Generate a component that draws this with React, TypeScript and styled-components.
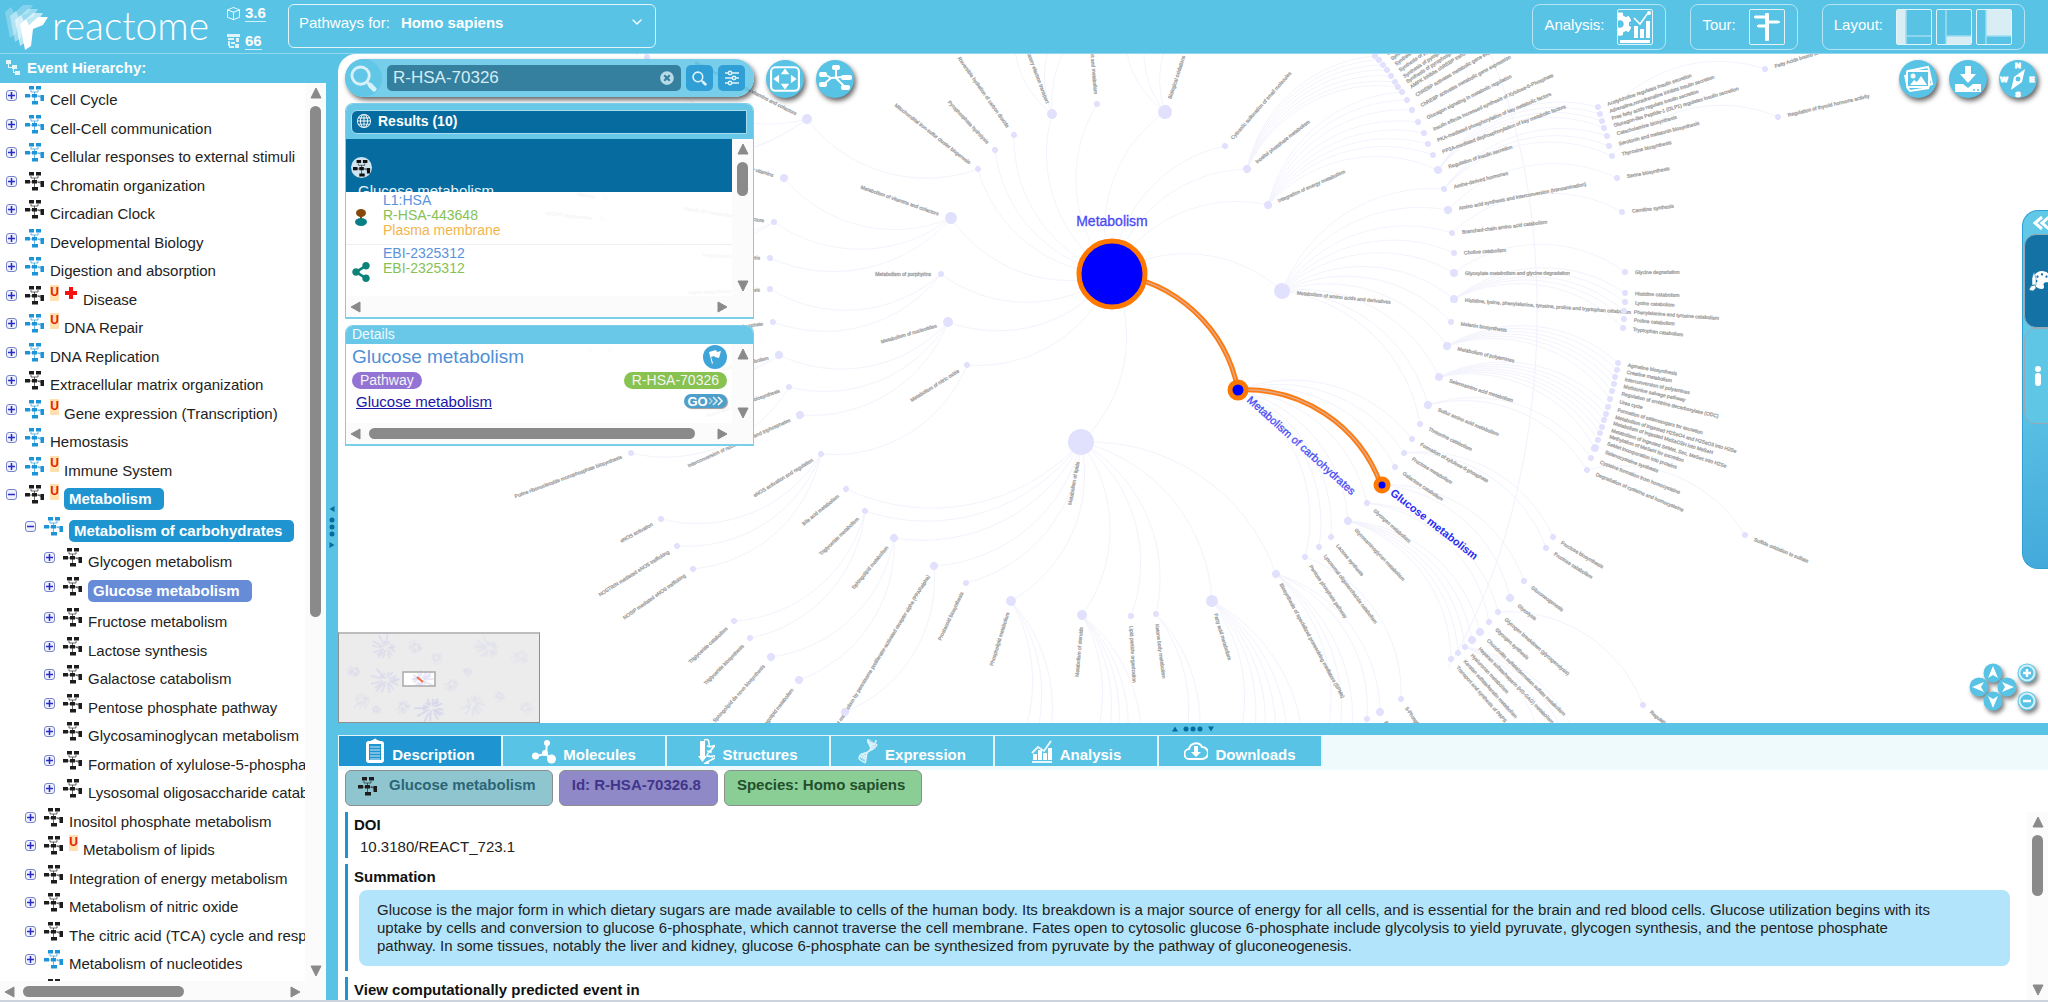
import React from "react";
import styled, { createGlobalStyle, css } from "styled-components";
import { FaCog, FaDna, FaInfo, FaPalette, FaShareAlt, FaTimesCircle } from "react-icons/fa";
import { BsGlobe, BsBox } from "react-icons/bs";
import { ChevronDown } from "lucide-react";

const sky = "#58c3e5";
const active = "#1e94d0";
const deep = "#066b9f";
const fontStack = `"Liberation Sans", Arial, sans-serif`;

const GlobalStyle = createGlobalStyle`
  * { box-sizing: border-box; }
  body { margin: 0; font: 15px ${fontStack}; color: #222; background: #fff; }
  button, input, select { font: inherit; color: inherit; margin: 0; padding: 0; border: 0; background: none; }
  button { cursor: pointer; }
  h1, h2, h3, p, ul { margin: 0; padding: 0; font-size: inherit; }
  ul { list-style: none; }
  svg { display: block; flex: none; }
`;

const Page = styled.div`
  height: 100vh;
  display: flex;
  flex-direction: column;
  overflow: hidden;
  background: ${sky};
  border-bottom: 2px solid #cdd3dc;
`;

/* ---------- header ---------- */

const Header = styled.header`
  height: 54px;
  flex: none;
  display: flex;
  align-items: flex-start;
  padding: 4px 23px 0 5px;
  color: #fff;
  border-bottom: 1px solid #8fd7ee;
`;

const Logo = styled.a`
  display: flex;
  width: 222px;
  color: #fff;
  text-decoration: none;
`;

const Wordmark = styled.span`
  font: 300 39px/42px Lato, ${fontStack};
  padding-left: 3px;
`;

const Versions = styled.div`
  width: 61px;
  display: flex;
  flex-direction: column;
  gap: 10px;
`;

const Version = styled.a`
  display: flex;
  align-items: center;
  gap: 5px;
  color: #fff;
  font-weight: bold;
  text-decoration: none;
  line-height: 17px;
  span { border-bottom: 1px solid #d5eff9; }
`;

const SpeciesBox = styled.label`
  width: 368px;
  height: 44px;
  display: flex;
  align-items: center;
  gap: 10px;
  padding: 0 10px 8px;
  border: 1px solid #e3f5fb;
  border-radius: 6px;
  select {
    flex: 1;
    padding-left: 1px;
    appearance: none;
    font-weight: bold;
    color: #fff;
  }
`;

const HeaderTools = styled.div`
  margin-left: auto;
  display: flex;
  gap: 24px;
`;

const ToolBox = styled.div`
  height: 46px;
  display: flex;
  align-items: center;
  gap: 4px;
  padding: 0 12px 0 11px;
  border: 1px solid #b5e4f4;
  border-radius: 8px;
  span { padding: 0 9px 5px 0; }
`;

const ToolButton = styled.button`
  width: 36px;
  height: 36px;
  display: grid;
  place-items: center;
  border: 1px solid #e3f5fb;
  border-radius: 2px;
  overflow: hidden;
`;

/* ---------- scroll bars ---------- */

const Bar = styled.div<{ $horizontal?: boolean }>`
  display: flex;
  flex: none;
  align-items: center;
  justify-content: space-between;
  background: #fbfbfb;
  ${(p) => (p.$horizontal ? css`height: 21px; padding: 0 4px;` : css`width: 21px; padding: 4px 0; flex-direction: column;`)}
`;

const Track = styled.div<{ $horizontal?: boolean }>`
  flex: 1;
  display: flex;
  flex-direction: ${(p) => (p.$horizontal ? "row" : "column")};
  padding: ${(p) => (p.$horizontal ? "0 7px" : "7px 0")};
`;

const Thumb = styled.div<{ $size: number; $horizontal?: boolean }>`
  flex: 0 0 ${(p) => p.$size}%;
  ${(p) => (p.$horizontal ? "height" : "width")}: 11px;
  border-radius: 6px;
  background: #8a8a8a;
`;

const arrowPaths = {
  up: "M6 1 11 11H1Z",
  down: "M6 11 11 1H1Z",
  left: "M1 6 10 1V11Z",
  right: "M11 6 2 1V11Z",
};

const Arrow = ({ to }: { to: keyof typeof arrowPaths }) => (
  <svg width="12" height="12" viewBox="0 0 12 12">
    <path d={arrowPaths[to]} fill="#8a8a8a" stroke="#8a8a8a" strokeLinejoin="round" />
  </svg>
);

const ScrollBar = ({ size, horizontal }: { size?: number; horizontal?: boolean }) => (
  <Bar $horizontal={horizontal} aria-hidden>
    <Arrow to={horizontal ? "left" : "up"} />
    <Track $horizontal={horizontal}>{size ? <Thumb $size={size} $horizontal={horizontal} /> : null}</Track>
    <Arrow to={horizontal ? "right" : "down"} />
  </Bar>
);

/* ---------- hierarchy ---------- */

const Body = styled.div`
  flex: 1;
  min-height: 0;
  display: flex;
`;

const Sidebar = styled.aside`
  width: 326px;
  flex: none;
  display: flex;
  flex-direction: column;
`;

const SidebarTitle = styled.h2`
  height: 29px;
  display: flex;
  align-items: center;
  gap: 6px;
  padding: 0 0 2px 6px;
  color: #fff;
`;

const TreePane = styled.div`
  flex: 1;
  min-height: 0;
  display: flex;
  background: #fff;
`;

const Tree = styled.ul`
  flex: 1;
  min-width: 0;
  padding-top: 2px;
  overflow: hidden;
  display: flex;
  flex-direction: column;
`;

const TreeRow = styled.li<{ $level: number; $selected: boolean }>`
  flex: 1 0 ${(p) => (p.$selected ? 31 : 28)}px;
  display: flex;
  align-items: flex-start;
  padding-left: ${(p) => 6 + 19 * p.$level}px;
  white-space: nowrap;
  line-height: 22px;
`;

const TreeTail = styled.li`
  flex: 0 0 3px;
  overflow: hidden;
  padding-left: 44px;
`;

const Toggle = styled.button`
  width: 11px;
  height: 11px;
  flex: none;
  margin: 5px 8px 0 0;
  display: grid;
  place-items: center;
  border: 1px solid #7884c8;
  border-radius: 3px;
  background: #eef0fb;
`;

const Badge = styled.span`
  width: 9px;
  height: 16px;
  margin: 0 0 0 5px;
  flex: none;
  background: #ffe0ae;
  color: #e32400;
  font: bold 12px/14px ${fontStack};
  text-align: center;
`;

const RowLabel = styled.span<{ $tone?: string }>`
  margin: 4px 0 0 5px;
  ${(p) =>
    p.$tone &&
    css`
      padding: 0 12px 0 5px;
      border-radius: 5px;
      background: ${p.$tone};
      color: #fff;
      font-weight: bold;
    `}
`;

const PathwayIcon = ({ color = "#222", size = 20 }: { color?: string; size?: number }) => (
  <svg width={size} height={size} viewBox="0 0 20 20">
    <path d="M6 5v2h7V5M9.500 7v3M2 11h15M9.500 10v7M13 11l4 2" fill="none" stroke={color} strokeOpacity=".65" />
    <path d="M4 1h5v3.500H4zM11 1h5v3.500h-5zM0 9h5v3.500H0zM7 9h5v3.500H7zM15.500 10h3.500v6h-3.500zM7 16h6v3.500H7z" fill={color} />
  </svg>
);

type Row = { name: string; level: number; blue?: boolean; updated?: boolean; disease?: boolean; tone?: string; open?: boolean };

const rows: Row[] = [
  { name: "Cell Cycle", level: 0, blue: true },
  { name: "Cell-Cell communication", level: 0, blue: true },
  { name: "Cellular responses to external stimuli", level: 0, blue: true },
  { name: "Chromatin organization", level: 0 },
  { name: "Circadian Clock", level: 0 },
  { name: "Developmental Biology", level: 0, blue: true },
  { name: "Digestion and absorption", level: 0, blue: true },
  { name: "Disease", level: 0, updated: true, disease: true },
  { name: "DNA Repair", level: 0, blue: true, updated: true },
  { name: "DNA Replication", level: 0, blue: true },
  { name: "Extracellular matrix organization", level: 0 },
  { name: "Gene expression (Transcription)", level: 0, blue: true, updated: true },
  { name: "Hemostasis", level: 0, blue: true },
  { name: "Immune System", level: 0, blue: true, updated: true },
  { name: "Metabolism", level: 0, updated: true, open: true, tone: active },
  { name: "Metabolism of carbohydrates", level: 1, blue: true, open: true, tone: active },
  { name: "Glycogen metabolism", level: 2 },
  { name: "Glucose metabolism", level: 2, tone: "#668cd8" },
  { name: "Fructose metabolism", level: 2 },
  { name: "Lactose synthesis", level: 2 },
  { name: "Galactose catabolism", level: 2 },
  { name: "Pentose phosphate pathway", level: 2 },
  { name: "Glycosaminoglycan metabolism", level: 2 },
  { name: "Formation of xylulose-5-phosphate", level: 2 },
  { name: "Lysosomal oligosaccharide catabolism", level: 2 },
  { name: "Inositol phosphate metabolism", level: 1 },
  { name: "Metabolism of lipids", level: 1, updated: true },
  { name: "Integration of energy metabolism", level: 1 },
  { name: "Metabolism of nitric oxide", level: 1 },
  { name: "The citric acid (TCA) cycle and respiratory electron transport", level: 1 },
  { name: "Metabolism of nucleotides", level: 1, blue: true },
];

const TreeFoot = styled.div`
  height: 19px;
  padding-right: 21px;
  background: #fbfbfb;
`;

const Hierarchy = () => (
  <Sidebar>
    <SidebarTitle>
      <svg width="15" height="15" viewBox="0 0 15 15" fill="#e4f5fb">
        <path d="M0 0h5v4H0zM6 5h5v4H6zM9 11h5v4H9zM2 4h1v3h3v1H2zM7 9h1v3h2v1H7z" />
      </svg>
      Event Hierarchy:
    </SidebarTitle>
    <TreePane>
      <Tree>
        {rows.map((r) => (
          <TreeRow key={r.name} $level={r.level} $selected={!!r.tone}>
            <Toggle aria-label={`Toggle ${r.name}`}>
              <svg width="7" height="7" viewBox="0 0 7 7">
                <path d={r.open ? "M0 3.500h7" : "M0 3.500h7M3.500 0v7"} stroke="#2b2bc8" strokeWidth="1.500" />
              </svg>
            </Toggle>
            <PathwayIcon color={r.blue ? "#1e94d8" : "#1d1d1d"} />
            {r.updated && <Badge>U</Badge>}
            {r.disease && (
              <svg width="19" height="18" viewBox="0 0 19 18">
                <path d="M10 2h4v4h4v4h-4v4h-4v-4H6V6h4z" fill="#f31111" />
              </svg>
            )}
            <RowLabel $tone={r.tone}>{r.name}</RowLabel>
          </TreeRow>
        ))}
        <TreeTail>
          <PathwayIcon />
        </TreeTail>
      </Tree>
      <ScrollBar size={60} />
    </TreePane>
    <TreeFoot>
      <ScrollBar size={62} horizontal />
    </TreeFoot>
  </Sidebar>
);

/* ---------- splitters ---------- */

const Splitter = styled.div`
  flex: 0 0 12px;
  display: flex;
  align-items: center;
  justify-content: center;
  background: ${sky};
`;

const Grip = ({ vertical }: { vertical?: boolean }) => (
  <svg width={vertical ? 8 : 44} height={vertical ? 44 : 8} viewBox={vertical ? "0 0 8 44" : "0 0 44 8"} fill={deep}>
    <g transform={vertical ? "matrix(0 1 1 0 0 0)" : undefined}>
      <path d="M1 6.500h6L4 1.500zM37 1.500h6L40 6.500z" />
      <circle cx="15" cy="4" r="2.500" />
      <circle cx="22" cy="4" r="2.500" />
      <circle cx="29" cy="4" r="2.500" />
    </g>
  </svg>
);

/* ---------- pathway diagram ---------- */

type Node = [x: number, y: number, r: number, label: string, parent: number];

const nodes: Node[] = [
  [1112, 274, 0, "", -1],
  [1282, 291, 8, "Metabolism of amino acids and derivatives", 0],
  [1081, 442, 13, "Metabolism of lipids", 0],
  [1268, 205, 4, "Integration of energy metabolism", 0],
  [1247, 169, 4, "Inositol phosphate metabolism", 0],
  [1225, 146, 3, "Cytosolic sulfonation of small molecules", 0],
  [1165, 112, 7, "Biological oxidations", 0],
  [1097, 104, 3, "Abacavir transport and metabolism", 0],
  [1052, 114, 5, "The citric acid (TCA) cycle and respiratory electron transport", 0],
  [1014, 135, 3, "Reversible hydration of carbon dioxide", 0],
  [995, 150, 3, "Pyrophosphate hydrolysis", 0],
  [978, 169, 3, "Mitochondrial iron-sulfur cluster biogenesis", 0],
  [951, 218, 6, "Metabolism of vitamins and cofactors", 0],
  [941, 274, 3, "Metabolism of porphyrins", 0],
  [948, 322, 5, "Metabolism of nucleotides", 0],
  [967, 365, 3, "Metabolism of nitric oxide", 0],
  [1238, 390, 0, "", 0],
  [1381, 485, 0, "", 16],
  // lipids
  [846, 489, 3, "Bile acid metabolism", 2],
  [865, 511, 3, "Triglyceride metabolism", 2],
  [894, 538, 4, "Sphingolipid metabolism", 2],
  [934, 566, 4, "Regulation of lipid metabolism by peroxisome proliferator-activated receptor alpha (PPARalpha)", 2],
  [966, 583, 3, "Prostanoid biosynthesis", 2],
  [1011, 601, 5, "Phospholipid metabolism", 2],
  [1082, 615, 5, "Metabolism of steroids", 2],
  [1131, 616, 3, "Lipid particle organization", 2],
  [1156, 614, 3, "Ketone body metabolism", 2],
  [1212, 601, 6, "Fatty acid metabolism", 2],
  [1276, 574, 4, "Biosynthesis of specialized proresolving mediators (SPMs)", 2],
  // left side
  [807, 119, 5, "Metabolism of water-soluble vitamins and cofactors", 11],
  [784, 178, 4, "Metabolism of fat-soluble vitamins", 12],
  [774, 222, 3, "Vitamin B5 metabolism and structure", 12],
  [770, 258, 3, "Molybdenum biosynthesis", 12],
  [770, 289, 3, "Heme biosynthesis and analysis", 13],
  [773, 322, 3, "Heme degradation and phosphate", 13],
  [779, 355, 4, "Nucleotide catabolism", 14],
  [789, 387, 3, "Purine and pyrimidine biosynthesis", 14],
  [800, 415, 4, "Interconversion of nucleotide di- and triphosphates", 14],
  [821, 454, 3, "eNOS activation and regulation", 15],
  [631, 453, 3, "Purine ribonucleoside monophosphate biosynthesis", 36],
  [661, 519, 3, "eNOS activation", 38],
  [677, 546, 3, "NOSTRIN mediated eNOS trafficking", 38],
  [693, 569, 3, "NOSIP mediated eNOS trafficking", 38],
  [734, 621, 3, "Triglyceride catabolism", 19],
  [750, 638, 3, "Triglyceride biosynthesis", 19],
  [771, 657, 4, "Sphingolipid de novo biosynthesis", 20],
  [799, 680, 4, "Glycosphingolipid metabolism", 20],
  [845, 712, 4, "", 21],
  [647, 57, 3, "Vitamin C (ascorbate) metabolism", 29],
  [605, 198, 3, "Vitamins", 31],
  [602, 219, 3, "NADPH regeneration", 31],
  // energy and inositol
  [1375, 56, 3, "Synthesis of IP2, IP, and Ins in the cytosol", 4],
  [1379, 60, 3, "Synthesis of IP3 and IP4 in the cytosol", 4],
  [1383, 65, 3, "Synthesis of IPs in the ER lumen", 4],
  [1387, 70, 3, "Synthesis of IPs in the nucleus", 4],
  [1391, 76, 3, "Synthesis of pyrophosphates in the cytosol", 4],
  [1395, 82, 3, "Synthesis of pyrophosphates in the nucleus", 4],
  [1398, 87, 3, "Synthesis of pyrophosphates", 4],
  [1402, 92, 3, "AMPK inhibits chREBP transcriptional activation", 3],
  [1407, 100, 3, "ChREBP activates metabolic gene expression", 3],
  [1412, 110, 3, "ChREBP activates metabolic gene expression", 3],
  [1418, 122, 3, "Glucagon signaling in metabolic regulation", 3],
  [1424, 133, 3, "Insulin effects increased synthesis of Xylulose-5-Phosphate", 3],
  [1428, 144, 3, "PKA-mediated phosphorylation of key metabolic factors", 3],
  [1433, 155, 3, "PP2A-mediated dephosphorylation of key metabolic factors", 3],
  [1438, 170, 4, "Regulation of insulin secretion", 3],
  // amino acids
  [1444, 189, 3, "Amine-derived hormones", 1],
  [1448, 210, 4, "Amino acid synthesis and interconversion (transamination)", 1],
  [1452, 233, 3, "Branched-chain amino acid catabolism", 1],
  [1454, 253, 3, "Choline catabolism", 1],
  [1454, 273, 4, "Glyoxylate metabolism and glycine degradation", 1],
  [1454, 299, 4, "Histidine, lysine, phenylalanine, tyrosine, proline and tryptophan catabolism", 1],
  [1451, 322, 3, "Melanin biosynthesis", 1],
  [1447, 346, 4, "Metabolism of polyamines", 1],
  [1439, 377, 4, "Selenoamino acid metabolism", 1],
  [1428, 405, 4, "Sulfur amino acid metabolism", 1],
  [1420, 424, 3, "Threonine catabolism", 1],
  // carbohydrates
  [1412, 439, 3, "Formation of xylulose-5-phosphate", 16],
  [1404, 453, 3, "Fructose metabolism", 16],
  [1395, 467, 3, "Galactose catabolism", 16],
  [1367, 503, 3, "Glycogen metabolism", 16],
  [1348, 521, 4, "Glycosaminoglycan metabolism", 16],
  [1331, 537, 3, "Lactose synthesis", 16],
  [1319, 547, 3, "Lysosomal oligosaccharide catabolism", 16],
  [1305, 557, 3, "Pentose phosphate pathway", 16],
  // outer ring
  [1598, 107, 3, "Acetylcholine regulates insulin secretion", 65],
  [1600, 114, 3, "Adrenaline,noradrenaline inhibits insulin secretion", 65],
  [1602, 121, 3, "Free fatty acids regulate insulin secretion", 65],
  [1604, 128, 3, "Glucagon-like Peptide-1 (GLP1) regulates insulin secretion", 65],
  [1607, 136, 3, "Catecholamine biosynthesis", 66],
  [1609, 146, 3, "Serotonin and melatonin biosynthesis", 66],
  [1612, 156, 3, "Thyroxine biosynthesis", 66],
  [1617, 178, 3, "Serine biosynthesis", 67],
  [1622, 212, 3, "Carnitine synthesis", 68],
  [1625, 272, 3, "Glycine degradation", 70],
  [1625, 293, 3, "Histidine catabolism", 71],
  [1625, 302, 3, "Lysine catabolism", 71],
  [1624, 311, 3, "Phenylalanine and tyrosine catabolism", 71],
  [1624, 319, 3, "Proline catabolism", 71],
  [1623, 328, 3, "Tryptophan catabolism", 71],
  [1618, 363, 3, "Agmatine biosynthesis", 73],
  [1617, 370, 3, "Creatine metabolism", 73],
  [1615, 377, 3, "Interconversion of polyamines", 73],
  [1614, 384, 3, "Methionine salvage pathway", 73],
  [1612, 391, 3, "Regulation of ornithine decarboxylase (ODC)", 73],
  [1610, 399, 3, "Urea cycle", 73],
  [1608, 407, 3, "Formation of selenosugars for excretion", 74],
  [1606, 414, 3, "Metabolism of ingested H2SeO4 and H2SeO3 into H2Se", 74],
  [1604, 420, 3, "Metabolism of ingested MeSeO2H into MeSeH", 74],
  [1602, 427, 3, "Metabolism of ingested SeMet, Sec, MeSec into H2Se", 74],
  [1600, 433, 3, "Methylation of MeSeH for excretion", 74],
  [1598, 440, 3, "SeMet incorporation into proteins", 74],
  [1595, 448, 4, "Selenocysteine synthesis", 74],
  [1591, 458, 3, "Cysteine formation from homocysteine", 75],
  [1587, 470, 3, "Degradation of cysteine and homocysteine", 75],
  [1765, 69, 3, "Fatty Acids bound to GPR40 (FFAR1)", 87],
  [1778, 117, 3, "Regulation of thyroid hormone activity", 91],
  [1745, 535, 3, "Sulfide oxidation to sulfate", 114],
  [1553, 537, 3, "Fructose biosynthesis", 78],
  [1546, 548, 3, "Fructose catabolism", 78],
  [1524, 581, 3, "Gluconeogenesis", 17],
  [1510, 598, 4, "Glycolysis", 17],
  [1498, 612, 3, "Glycogen breakdown (glycogenolysis)", 80],
  [1489, 622, 3, "Glycogen synthesis", 80],
  [1480, 632, 4, "Chondroitin sulfate/dermatan sulfate metabolism", 81],
  [1472, 640, 4, "Heparan sulfate/heparin (HS-GAG) metabolism", 81],
  [1465, 647, 3, "Hyaluronan metabolism", 81],
  [1458, 653, 3, "Keratan sulfate/keratin metabolism", 81],
  [1451, 659, 3, "Transport and synthesis of PAPS", 81],
  [1643, 705, 3, "Regulation of glycolysis", 122],
  [1401, 699, 3, "5-Phosphoribose 1-diphosphate biosynthesis", 84],
  [1380, 712, 4, "Biosynthesis of maresins", 28],
  [1367, 719, 3, "Biosynthesis of protectins", 28],
  // branches that run past the visible area
  ...[1010, 1030, 990].map((x): Node => [x, 790, 3, "", 23]),
  ...[1060, 1080, 1095, 1110, 1130].map((x): Node => [x, 800, 3, "", 24]),
  ...[1160, 1180].map((x): Node => [x, 800, 3, "", 26]),
  ...[1215, 1235, 1250, 1265, 1280, 1300].map((x): Node => [x, 790, 3, "", 27]),
  ...[1315, 1330, 1345].map((x): Node => [x, 770, 3, "", 28]),
  ...[1540, 1555, 1570, 1585].map((x): Node => [x, 770, 3, "", 126]),
  ...[1020, 1080, 1120].map((x): Node => [x, 0, 3, "", 8]),
  ...[1130, 1160, 1200].map((x): Node => [x, 0, 3, "", 6]),
  ...[560, 580].map((x): Node => [x, 120, 3, "", 29]),
  ...[590, 610].map((x): Node => [x, 350, 3, "", 35]),
];

const hub = { x: 1112, y: 274 };

const arc = (x1: number, y1: number, x2: number, y2: number) => {
  const radius = Math.hypot(x2 - x1, y2 - y1) * 0.84;
  return `M${x1} ${y1}A${radius} ${radius} 0 0 1 ${x2} ${y2}`;
};

const NodeLabel = styled.text`
  font: 5px ${fontStack};
  fill: #8c8c8c;
  stroke: #a6a6a6;
  stroke-width: 0.3px;
  dominant-baseline: central;
`;

const ActiveLabel = styled.text<{ $size: number; $bold?: boolean }>`
  font: ${(p) => (p.$bold ? "bold " : "")}${(p) => p.$size}px ${fontStack};
  fill: ${(p) => (p.$bold ? "#2a2af5" : "#4a4af5")};
  stroke: ${(p) => (p.$bold ? "none" : "#4a4af5")};
  stroke-width: 0.3px;
  dominant-baseline: central;
`;

const Diagram = styled.svg`
  position: absolute;
  inset: 0;
  width: 100%;
  height: 100%;
`;

const Graph = () => (
  <Diagram viewBox="338 54 1710 669" preserveAspectRatio="xMinYMin slice">
    <path d="M1484 40C1560 200 1560 480 1448 668" fill="none" stroke="#f1f1fd" />
    {nodes.map(([x, y, , , parent], i) =>
      parent < 0 ? null : <path key={i} d={arc(nodes[parent][0], nodes[parent][1], x, y)} fill="none" stroke="#f3f3fd" />
    )}
    {nodes.map(([x, y, r, label], i) => {
      const left = x < hub.x;
      const angle = (Math.atan2(y - hub.y, x - hub.x) * 180) / Math.PI;
      const gap = r + 7;
      return (
        <g key={i} transform={`translate(${x} ${y}) rotate(${left ? angle + 180 : angle})`}>
          <circle r={r} fill="#e1e1fe" />
          {label && (
            <NodeLabel x={left ? -gap : gap} textAnchor={left ? "end" : "start"}>
              {label}
            </NodeLabel>
          )}
        </g>
      );
    })}
    {[arc(1112, 274, 1238, 390), arc(1238, 390, 1381, 485)].map((d) => (
      <g key={d} fill="none">
        <path d={d} stroke="#ff7a0c" strokeWidth="5" />
        <path d={d} stroke="#e3a98a" strokeWidth="1.500" />
      </g>
    ))}
    <g fill="#00f" stroke="#ff7800">
      <circle cx="1112" cy="274" r="33" strokeWidth="5" />
      <circle cx="1238" cy="390" r="8" strokeWidth="5" />
      <circle cx="1382" cy="485" r="6" strokeWidth="5" />
    </g>
    <ActiveLabel $size={14} x="1112" y="221" textAnchor="middle">Metabolism</ActiveLabel>
    <ActiveLabel $size={11} transform="translate(1249 398) rotate(42)">Metabolism of carbohydrates</ActiveLabel>
    <ActiveLabel $size={11} $bold transform="translate(1392 491) rotate(38)">Glucose metabolism</ActiveLabel>
  </Diagram>
);

/* ---------- canvas ---------- */

const Main = styled.main`
  flex: 1;
  min-width: 0;
  display: flex;
  flex-direction: column;
`;

const Canvas = styled.section`
  position: relative;
  flex: 1;
  min-height: 0;
  overflow: hidden;
  background: #fff;
  border-top-left-radius: 18px;
`;

const LeftOverlay = styled.div`
  position: absolute;
  top: 5px;
  left: 7px;
  width: 409px;
  display: flex;
  flex-direction: column;
  gap: 6px;
`;

const SearchBar = styled.form`
  height: 38px;
  display: flex;
  align-items: center;
  gap: 5px;
  padding-right: 9px;
  border-radius: 19px;
  background: rgba(88, 195, 229, 0.82);
  box-shadow: 2px 3px 5px rgba(0, 0, 0, 0.6);
`;

const SearchMark = styled.span`
  width: 37px;
  height: 38px;
  display: grid;
  place-items: center;
  border-radius: 50%;
  background: #62c7e7;
  color: #d8f0f9;
`;

const SearchField = styled.div`
  flex: 1;
  min-width: 0;
  height: 26px;
  display: flex;
  align-items: center;
  padding: 0 7px 0 6px;
  border-radius: 5px;
  background: #35809f;
  color: #b9dbe8;
  input {
    flex: 1;
    min-width: 0;
    color: #d3edf6;
    font-size: 17px;
    outline: 0;
  }
  button { display: grid; }
`;

const SearchButton = styled.button`
  width: 27px;
  height: 26px;
  display: grid;
  place-items: center;
  border-radius: 5px;
  background: #309fd6;
  color: #e2f4fb;
`;

const Panel = styled.section`
  border: 1px solid #7ccfe9;
  border-bottom-width: 2px;
  border-radius: 8px 8px 0 0;
  overflow: hidden;
  background: rgba(255, 255, 255, 0.9);
`;

const ResultsHead = styled.div`
  height: 35px;
  padding: 6px 6px 0 5px;
  background: #69c8e7;
`;

const ResultsButton = styled.button`
  width: 100%;
  height: 24px;
  display: flex;
  align-items: center;
  gap: 7px;
  padding: 0 5px 2px;
  border: 1px solid #a7dcf0;
  border-radius: 6px 0 0 6px;
  background: ${deep};
  color: #fff;
  font-size: 14px;
  font-weight: bold;
`;

const PanelBody = styled.div<{ $height: number }>`
  height: ${(p) => p.$height}px;
  display: flex;
`;

const PanelFoot = styled.div`
  padding-right: 21px;
  background: #fbfbfb;
`;

const ResultList = styled.ul`
  flex: 1;
  min-width: 0;
  overflow: hidden;
`;

const SelectedResult = styled.li`
  height: 53px;
  overflow: hidden;
  padding: 18px 0 0 5px;
  background: ${deep};
  color: #e8f6fb;
  p { padding: 4px 0 0 7px; line-height: 18px; }
`;

const RoundIcon = styled.span`
  width: 21px;
  height: 21px;
  display: grid;
  place-items: center;
  border-radius: 50%;
  overflow: hidden;
  background: #cfe3ee;
`;

const Result = styled.li`
  height: 53px;
  display: flex;
  align-items: center;
  gap: 12px;
  padding-left: 5px;
  border-bottom: 1px solid #efefef;
  font-size: 14px;
  line-height: 15px;
  &:last-child { border-bottom: 0; }
  & > div { align-self: flex-start; padding-top: 1px; }
`;

const Tint = styled.p<{ $color: string }>`
  color: ${(p) => p.$color};
`;

const DetailsHead = styled.h3`
  height: 18px;
  padding-left: 6px;
  background: #69c8e7;
  color: #eef9fd;
  font-size: 14px;
  font-weight: normal;
  line-height: 17px;
`;

const DetailsInfo = styled.div`
  flex: 1;
  display: flex;
  flex-direction: column;
  padding: 0 5px 0 6px;
`;

const DetailsLine = styled.div<{ $height: number }>`
  height: ${(p) => p.$height}px;
  display: flex;
  align-items: center;
  justify-content: space-between;
`;

const DetailsTitle = styled.h3`
  color: #508fd6;
  font-size: 19px;
  font-weight: normal;
`;

const FlagButton = styled.button`
  width: 24px;
  height: 24px;
  border-radius: 50%;
  display: grid;
  place-items: center;
  background: #3fa5d9;
`;

const Pill = styled.span<{ $color: string }>`
  padding: 0 8px;
  border-radius: 9px;
  background: ${(p) => p.$color};
  color: #f5f5f5;
  font-size: 14px;
  line-height: 17px;
`;

const DetailsLink = styled.a`
  padding-left: 4px;
  color: #1a14a8;
`;

const GoButton = styled.button`
  width: 43px;
  height: 14px;
  display: flex;
  align-items: center;
  justify-content: center;
  border-radius: 7px;
  background: #4f9fcb;
  box-shadow: 1px 1px 1px #999;
  color: #fff;
  font-size: 13px;
  font-weight: bold;
`;

const RoundRow = styled.div<{ $side: "left" | "right" }>`
  position: absolute;
  top: 6px;
  ${(p) => (p.$side === "left" ? "left: 428px" : "right: 11px")};
  display: flex;
  gap: 12px;
`;

const RoundButton = styled.button`
  width: 38px;
  height: 38px;
  display: grid;
  place-items: center;
  border-radius: 50%;
  background: ${sky};
  box-shadow: 2px 3px 5px rgba(0, 0, 0, 0.6);
  overflow: hidden;
`;

const Drawer = styled.aside`
  position: absolute;
  top: 156px;
  right: 0;
  width: 26px;
  height: 359px;
  padding-left: 1px;
  overflow: hidden;
  border: 1px solid #2f9fd4;
  border-right: 0;
  border-radius: 16px 0 0 16px;
  background: linear-gradient(160deg, #62c8e7 40%, #42a9db);
  color: #fff;
`;

const DrawerButton = styled.button<{ $height: number; $background?: string }>`
  width: 36px;
  height: ${(p) => p.$height}px;
  display: flex;
  align-items: center;
  padding-left: 4px;
  ${(p) =>
    p.$background &&
    css`
      border: 1px solid #9aa9b4;
      border-radius: 12px;
      background: ${p.$background};
    `}
`;

const NavPad = styled.div`
  position: absolute;
  right: 11px;
  bottom: 12px;
  display: flex;
  filter: drop-shadow(2px 3px 2px rgba(0, 0, 0, 0.5));
`;

const Compass = styled.div`
  display: grid;
  grid-template: 14px 6px 8px 6px 14px / 14px 6px 8px 6px 14px;
`;

const PadButton = styled.button<{ $area?: string }>`
  width: 20px;
  height: 20px;
  ${(p) => p.$area && `grid-area: ${p.$area};`}
`;

const ZoomStack = styled.div`
  display: flex;
  flex-direction: column;
  justify-content: space-between;
`;

const MiniMap = styled.div`
  position: absolute;
  left: 0;
  bottom: 0;
  width: 202px;
  height: 91px;
  border: 1px solid #8f8f8f;
  border-top: 2px solid #bdbdbd;
  background: #ececec;
`;

const clusters: [number, number, number, number][] = [
  [47, 14, 16, 1], [150, 14, 15, 0.6], [77, 13, 9, 0.5], [16, 37, 8, 0.6], [48, 46, 17, 1.2], [182, 22, 11, 0.4],
  [113, 50, 9, 0.5], [92, 74, 17, 1.5], [64, 72, 9, 0.7], [134, 70, 14, 0.6], [22, 66, 11, 0.5], [160, 62, 7, 0.4],
  [97, 24, 8, 0.4], [186, 74, 9, 0.4], [128, 38, 6, 0.4], [37, 76, 6, 0.5], [82, 46, 13, 1.3],
];

const MapSketch = () => (
  <svg width="200" height="88" viewBox="0 0 200 88">
    <rect x="64" y="38" width="32" height="14" fill="#fff" />
    {clusters.map(([cx, cy, radius, weight], c) =>
      Array.from({ length: 16 }, (_, i) => {
        const turn = i * 2.4 + c;
        const from = radius * (0.15 + 0.1 * (i % 3));
        const to = radius * (0.5 + 0.12 * ((i * 7 + c) % 5));
        return (
          <path
            key={`${c}-${i}`}
            d={`M${cx + Math.cos(turn) * from} ${cy + Math.sin(turn) * from * 0.9}L${cx + Math.cos(turn) * to} ${cy + Math.sin(turn) * to * 0.9}`}
            stroke="#c4c4ee"
            strokeWidth="2"
            strokeOpacity={0.3 * weight}
          />
        );
      })
    )}
    <rect x="64" y="38" width="32" height="14" fill="none" stroke="#a9a9a9" strokeWidth="1.500" />
    <path d="M78 43l6 5" stroke="#f26a42" strokeWidth="2" />
  </svg>
);

const Magnifier = ({ size }: { size: number }) => (
  <svg width={size} height={size} viewBox="0 0 28 28" fill="none" stroke="currentColor" strokeLinecap="round">
    <circle cx="11" cy="11" r="9" strokeWidth="3" />
    <path d="M18 18l3 3" strokeWidth="3" />
    <path d="M21 21l4 4" strokeWidth="5" />
  </svg>
);

const FlagIcon = () => (
  <svg width="14" height="16" viewBox="0 0 14 16">
    <path d="M1 3l7-2 1 2 4-1-2 7-4-1-1-1-3 1 2 6-1 1z" fill="#fff" />
  </svg>
);

const FitIcon = () => (
  <svg width="30" height="26" viewBox="0 0 28 24">
    <rect x="1" y="1" width="26" height="22" rx="4" fill="none" stroke="#fff" strokeWidth="2" />
    <path d="M14 3l3 4h-6zM14 21l3-4h-6zM4 12l4-3v6zM24 12l-4-3v6z" fill="#fff" stroke="#fff" />
  </svg>
);

const ForkIcon = () => (
  <svg width="38" height="30" viewBox="0 0 38 30">
    <path d="M20 4v10M8 10l7 4 12-1M8 20l7-6M20 14l8 8" fill="none" stroke="#fff" strokeWidth="2" />
    <g fill="#fff">
      <rect x="16" y="1" width="8" height="5" rx="2" />
      <rect x="3" y="8" width="8" height="5" rx="2" />
      <rect x="3" y="18" width="8" height="5" rx="2" />
      <rect x="25" y="11" width="11" height="5" rx="2" />
      <rect x="25" y="21" width="9" height="5" rx="2" />
    </g>
  </svg>
);

const PictureIcon = () => (
  <svg width="32" height="28" viewBox="0 0 32 28" fill="none" stroke="#fff" strokeWidth="2">
    <path d="M5 22l3 4 19-3M6 6l20-4 1 3M3 10l3 14M27 5l3 14-3 1" />
    <rect x="5" y="6" width="22" height="16" rx="1" fill={sky} />
    <path d="M8 20l4-5 3 2 4-6 6 9z" fill="#fff" stroke="none" />
    <circle cx="11" cy="11" r="2.500" fill="#fff" stroke="none" />
  </svg>
);

const DownloadIcon = () => (
  <svg width="28" height="28" viewBox="0 0 28 28" fill="#fff">
    <path d="M11 1h6v8h5l-8 9-8-9h5z" />
    <path d="M1 19h8l5 4 5-4h8v8H1z" />
    <circle cx="20" cy="25" r="1" fill={sky} />
    <circle cx="24" cy="25" r="1" fill={sky} />
  </svg>
);

const CompassText = styled.text`
  font: bold 8px ${fontStack};
  fill: #fff;
  stroke: #fff;
  stroke-width: 1px;
  text-anchor: middle;
`;

const CompassIcon = () => (
  <svg width="38" height="38" viewBox="0 0 38 38">
    <path d="M26 9l-3 13-11 8 3-13z" fill="#fff" />
    <circle cx="19" cy="19" r="3" fill={sky} stroke="#fff" />
    <CompassText x="19" y="8">N</CompassText>
    <CompassText x="19" y="37">S</CompassText>
    <CompassText x="5" y="22">W</CompassText>
    <CompassText x="33" y="22">E</CompassText>
  </svg>
);

const SliderIcon = () => (
  <svg width="16" height="16" viewBox="0 0 16 16" fill="none" stroke="currentColor" strokeWidth="1.500">
    <path d="M1 3h3M8 3h7M1 8h7M12 8h3M1 13h3M8 13h7" />
    <circle cx="6" cy="3" r="1.700" />
    <circle cx="10" cy="8" r="1.700" />
    <circle cx="6" cy="13" r="1.700" />
  </svg>
);

const padTurns = [
  { name: "Up", turn: 0, area: "1 / 2 / 3 / 5" },
  { name: "Right", turn: 90, area: "2 / 4 / 5 / 6" },
  { name: "Down", turn: 180, area: "4 / 2 / 6 / 5" },
  { name: "Left", turn: 270, area: "2 / 1 / 5 / 3" },
];

const DiagramView = () => (
  <Canvas>
    <Graph />
    <MiniMap>
      <MapSketch />
    </MiniMap>
    <LeftOverlay>
      <SearchBar onSubmit={(e) => e.preventDefault()}>
        <SearchMark>
          <Magnifier size={27} />
        </SearchMark>
        <SearchField>
          <input aria-label="Search term" defaultValue="R-HSA-70326" />
          <button type="button" aria-label="Clear">
            <FaTimesCircle size={14} />
          </button>
        </SearchField>
        <SearchButton aria-label="Search">
          <Magnifier size={15} />
        </SearchButton>
        <SearchButton type="button" aria-label="Search options">
          <SliderIcon />
        </SearchButton>
      </SearchBar>
      <Panel>
        <ResultsHead>
          <ResultsButton>
            <BsGlobe size={14} /> Results (10)
          </ResultsButton>
        </ResultsHead>
        <PanelBody $height={157}>
          <ResultList>
            <SelectedResult>
              <RoundIcon>
                <PathwayIcon color="#111" size={18} />
              </RoundIcon>
              <p>Glucose metabolism</p>
            </SelectedResult>
            <Result>
              <svg width="20" height="20" viewBox="0 0 20 20">
                <path d="M9 8h2v3H9z" fill="#84480a" />
                <ellipse cx="10" cy="5" rx="5" ry="4" fill="#84480a" />
                <ellipse cx="10" cy="14" rx="6" ry="4" fill="#087f86" />
              </svg>
              <div>
                <Tint $color="#5b92dc">L1:HSA</Tint>
                <Tint $color="#86c154">R-HSA-443648</Tint>
                <Tint $color="#f2b54a">Plasma membrane</Tint>
              </div>
            </Result>
            <Result>
              <FaShareAlt size={20} color="#0c8378" />
              <div>
                <Tint $color="#5b92dc">EBI-2325312</Tint>
                <Tint $color="#86c154">EBI-2325312</Tint>
              </div>
            </Result>
          </ResultList>
          <ScrollBar size={31} />
        </PanelBody>
        <PanelFoot>
          <ScrollBar horizontal />
        </PanelFoot>
      </Panel>
      <Panel>
        <DetailsHead>Details</DetailsHead>
        <PanelBody $height={79}>
          <DetailsInfo>
            <DetailsLine $height={25}>
              <DetailsTitle>Glucose metabolism</DetailsTitle>
              <FlagButton aria-label="Flag">
                <FlagIcon />
              </FlagButton>
            </DetailsLine>
            <DetailsLine $height={22}>
              <Pill $color="#9373d3">Pathway</Pill>
              <Pill $color="#88c250">R-HSA-70326</Pill>
            </DetailsLine>
            <DetailsLine $height={20}>
              <DetailsLink href="#glucose">Glucose metabolism</DetailsLink>
              <GoButton aria-label="Go to pathway">
                GO
                <svg width="16" height="10" viewBox="0 0 16 10" fill="none" stroke="#fff" strokeWidth="1.500">
                  <path d="M1 2l3 3-3 3" strokeOpacity=".5" />
                  <path d="M5 1l4 4-4 4" strokeOpacity=".8" />
                  <path d="M10 1l4 4-4 4" />
                </svg>
              </GoButton>
            </DetailsLine>
          </DetailsInfo>
          <ScrollBar />
        </PanelBody>
        <PanelFoot>
          <ScrollBar size={96} horizontal />
        </PanelFoot>
      </Panel>
    </LeftOverlay>
    <RoundRow $side="left">
      <RoundButton aria-label="Fit to window"><FitIcon /></RoundButton>
      <RoundButton aria-label="Open diagram"><ForkIcon /></RoundButton>
    </RoundRow>
    <RoundRow $side="right">
      <RoundButton aria-label="Illustrations"><PictureIcon /></RoundButton>
      <RoundButton aria-label="Export"><DownloadIcon /></RoundButton>
      <RoundButton aria-label="Key"><CompassIcon /></RoundButton>
    </RoundRow>
    <Drawer>
      <DrawerButton $height={23} aria-label="Expand">
        <svg width="24" height="14" viewBox="0 0 24 14" fill="none" stroke="#fff" strokeWidth="3">
          <path d="M14 1L7 7l7 6M21 1l-7 6 7 6" />
        </svg>
      </DrawerButton>
      <DrawerButton $height={94} $background="#1572a4" aria-label="Colour profiles">
        <svg width="22" height="22" viewBox="0 0 22 22" fill="#fff">
          <FaPalette x={4} y={1} size={18} />
          <path d="M3 8l2-6 2 6v7H3zM0 20l2-4 4-1 1 3-3 3z" stroke="#1572a4" strokeWidth=".5" />
        </svg>
      </DrawerButton>
      <DrawerButton $height={96} $background="#5fc6e6" aria-label="Information">
        <svg width="20" height="20" viewBox="0 0 20 20" fill="#fff">
          <circle cx="9" cy="3" r="3" />
          <rect x="6" y="7" width="6" height="13" rx="3" />
        </svg>
      </DrawerButton>
    </Drawer>
    <NavPad>
      <Compass>
        {padTurns.map((p) => (
          <PadButton key={p.name} $area={p.area} aria-label={p.name}>
            <svg width="20" height="20" viewBox="0 0 20 20">
              <g transform={`rotate(${p.turn} 10 10)`}>
                <circle cx="10" cy="10" r="9.500" fill={sky} />
                <path d="M10 3l5 12-5-3-5 3z" fill="#fff" />
              </g>
            </svg>
          </PadButton>
        ))}
      </Compass>
      <ZoomStack>
        {["Zoom in", "Zoom out"].map((name, i) => (
          <PadButton key={name} aria-label={name}>
            <svg width="20" height="20" viewBox="0 0 20 20">
              <circle cx="10" cy="10" r="9.500" fill={sky} />
              <circle cx="10" cy="10" r="7.500" fill={sky} stroke="#d3eff9" strokeWidth="2" />
              <path d={i ? "M6 10h8" : "M6 10h8M10 6v8"} stroke="#fff" strokeWidth="2.500" />
            </svg>
          </PadButton>
        ))}
      </ZoomStack>
    </NavPad>
  </Canvas>
);

/* ---------- description panel ---------- */

const InfoPane = styled.section`
  flex: 0 0 265px;
  min-height: 0;
  display: flex;
  flex-direction: column;
  background: #fff;
`;

const TabStrip = styled.nav`
  flex: 0 0 35px;
  display: flex;
  align-items: flex-start;
  padding-left: 1px;
  background: #eefafb;
`;

const Tab = styled.button<{ $active?: boolean }>`
  width: 164px;
  height: 31px;
  display: flex;
  align-items: center;
  justify-content: center;
  gap: 7px;
  border-top: 1px solid #e3f5fb;
  border-right: 2px solid #e3f5fb;
  background: ${(p) => (p.$active ? active : sky)};
  color: #fff;
  font-weight: bold;
  span { padding-top: 6px; }
`;

const Chips = styled.div`
  display: flex;
  gap: 6px;
  padding: 0 7px;
`;

const Chip = styled.span<{ $background: string; $color: string }>`
  height: 36px;
  display: flex;
  gap: 11px;
  padding: 5px 16px 0 12px;
  border: 1px solid #8a8f8f;
  border-radius: 6px;
  background: ${(p) => p.$background};
  color: ${(p) => p.$color};
  font-weight: bold;
`;

const InfoScroll = styled.div`
  flex: 1;
  min-height: 0;
  display: flex;
  margin-top: 6px;
`;

const Sections = styled.div`
  flex: 1;
  overflow: hidden;
  padding-left: 7px;
  display: flex;
  flex-direction: column;
  gap: 6px;
`;

const Section = styled.article`
  flex: none;
  padding: 4px 0 3px 6px;
  border-left: 3px solid ${active};
  color: #222;
  h3 { color: #111; line-height: 18px; }
`;

const Value = styled.p`
  padding: 4px 0 0 6px;
  line-height: 17px;
`;

const Summation = styled.p`
  margin: 4px 17px 2px 5px;
  padding: 11px 70px 11px 18px;
  border-radius: 8px;
  background: #b2e5fb;
  line-height: 18px;
`;

const tabIcons = {
  Description: (
    <svg width="20" height="26" viewBox="0 0 20 26">
      <rect x="1" y="3" width="18" height="22" rx="3" fill="#fff" />
      <rect x="4" y="6" width="12" height="16" fill={active} />
      <path d="M5 9h10M5 12h10M5 15h10M5 18h10M5 21h10" stroke="#cfe9f6" />
      <path d="M5 5q0-3 3-3 2-3 4 0 3 0 3 3z" fill="#fff" />
    </svg>
  ),
  Molecules: (
    <svg width="24" height="25" viewBox="0 0 24 25">
      <path d="M15 4l-1 11-10 2M14 15l5 5" fill="none" stroke="#fff" strokeWidth="2" />
      <g fill="#fff">
        <circle cx="15" cy="4" r="3" />
        <circle cx="13" cy="14" r="3" />
        <circle cx="3.500" cy="17" r="3.500" />
        <circle cx="19.500" cy="20" r="4.500" />
      </g>
    </svg>
  ),
  Structures: (
    <svg width="17" height="26" viewBox="0 0 17 26">
      <path d="M2 3h5v15h2l-4.500 6L0 18h2z" fill="#fff" />
      <path d="M6 2q5-2 5 3t4 3-3 5 3 5-2 4-2 3M9 8l4 1M9 13l5 1M10 18l5 1" fill="none" stroke="#fff" strokeWidth="1.500" />
    </svg>
  ),
  Expression: (
    <svg width="20" height="26" viewBox="0 0 20 26" fill="none" stroke="#def2fa" strokeWidth="1.500">
      <path d="M10 1c-2 8 9 7 8 1M10 1c1 9 5 8 1 12S1 14 1 21M19 6c-2 7-8 5-10 9s0 6-2 10M1 21l6 4" />
      <path d="M11 4l6 3M11 7l5 2M12 10l3 1M3 16l6 3M2 18l6 3" />
      <path d="M11 1l8 5-4 5-4-2zM6 14l4 1-3 9-5-4z" fill="#def2fa" fillOpacity=".5" stroke="none" />
    </svg>
  ),
  Analysis: (
    <svg width="22" height="25" viewBox="0 0 22 25">
      <path d="M1 23h20M1 14l6-6 6 4 7-10" fill="none" stroke="#e8f7fc" strokeWidth="2" />
      <path d="M2 15h4v6H2zM7 11h4v10H7zM12 14h4v7h-4zM17 9h4v12h-4z" fill="#fff" />
    </svg>
  ),
  Downloads: (
    <svg width="24" height="20" viewBox="0 0 24 20">
      <path d="M6 18a5 5 0 0 1-1-10 7 7 0 0 1 13-2 6 6 0 0 1 0 12z" fill="none" stroke="#fff" strokeWidth="2" />
      <path d="M10 5h4v6h3l-5 5-5-5h3z" fill="#fff" />
    </svg>
  ),
};

const Information = () => (
  <InfoPane>
    <TabStrip>
      {Object.entries(tabIcons).map(([name, icon]) => (
        <Tab key={name} $active={name === "Description"}>
          {icon}
          <span>{name}</span>
        </Tab>
      ))}
    </TabStrip>
    <Chips>
      <Chip $background="#8fc5cf" $color="#2c6577">
        <PathwayIcon color="#1d1d1d" />
        Glucose metabolism
      </Chip>
      <Chip $background="#8f89c7" $color="#41358a">Id: R-HSA-70326.8</Chip>
      <Chip $background="#8ace95" $color="#234f2d">Species: Homo sapiens</Chip>
    </Chips>
    <InfoScroll>
      <Sections>
        <Section>
          <h3>DOI</h3>
          <Value>10.3180/REACT_723.1</Value>
        </Section>
        <Section>
          <h3>Summation</h3>
          <Summation>
            Glucose is the major form in which dietary sugars are made available to cells of the human body. Its
            breakdown is a major source of energy for all cells, and is essential for the brain and red blood cells.
            Glucose utilization begins with its uptake by cells and conversion to glucose 6-phosphate, which cannot
            traverse the cell membrane. Fates open to cytosolic glucose 6-phosphate include glycolysis to yield
            pyruvate, glycogen synthesis, and the pentose phosphate pathway. In some tissues, notably the liver and
            kidney, glucose 6-phosphate can be synthesized from pyruvate by the pathway of gluconeogenesis.
          </Summation>
        </Section>
        <Section>
          <h3>View computationally predicted event in</h3>
        </Section>
      </Sections>
      <ScrollBar size={43} />
    </InfoScroll>
  </InfoPane>
);

const LogoMark = () => (
  <svg width="44" height="46" viewBox="0 0 44 46" fill="#fff">
    {[0, 1, 2, 3].map((i) => (
      <g key={i} transform={`translate(${i * 5} ${i * 4})`} opacity={[0.25, 0.4, 0.6, 1][i]}>
        <path d="M0 8l6-5 3 6 9-8h10l-5 8-10 4-2 17-6 4z" />
      </g>
    ))}
  </svg>
);

export default function App() {
  return (
    <Page>
      <GlobalStyle />
      <Header>
        <Logo href="#home" aria-label="Reactome home">
          <LogoMark />
          <Wordmark>reactome</Wordmark>
        </Logo>
        <Versions>
          <Version href="#version">
            <BsBox size={13} />
            <span>3.6</span>
          </Version>
          <Version href="#release">
            <svg width="13" height="14" viewBox="0 0 13 14" fill="#dff3fa">
              <path d="M0 0h13v3H0zM1 4h6v2H1zM9 4h3v4H9zM1 7h2v5H1zM4 8h4v2H4zM8 10h4v4H8zM2 12h5v2H2z" />
            </svg>
            <span>66</span>
          </Version>
        </Versions>
        <SpeciesBox>
          Pathways for:
          <select defaultValue="Homo sapiens">
            <option>Homo sapiens</option>
          </select>
          <ChevronDown size={16} />
        </SpeciesBox>
        <HeaderTools>
          <ToolBox>
            <span>Analysis:</span>
            <ToolButton aria-label="Analysis tools">
              <svg width="34" height="34" viewBox="0 0 34 34" fill="#fff">
                <FaCog x={-10} y={2} size={24} />
                <path d="M16 16h4v12h-4zM22 19h4v9h-4zM28 11h4v17h-4zM2 30h30v3H2z" />
                <path d="M16 8l6 6 8-11" fill="none" stroke="#fff" strokeWidth="1.500" />
                <circle cx="31" cy="3" r="2" />
              </svg>
            </ToolButton>
          </ToolBox>
          <ToolBox>
            <span>Tour:</span>
            <ToolButton aria-label="Start tour">
              <svg width="30" height="30" viewBox="0 0 30 30" fill="#fff">
                <rect x="13" y="1" width="4" height="28" rx="1" />
                <path d="M2 5l1-1h10v2H3zM5 14l1-1h7v2H6zM17 9h9l2 1-2 1h-9z" stroke="#fff" strokeLinejoin="round" />
              </svg>
            </ToolButton>
          </ToolBox>
          <ToolBox>
            <span>Layout:</span>
            {["M0 0h9v34H0z", "M9 26h25v8H9z", "M9 0h25v26H9z"].map((d, i) => (
              <ToolButton key={d} aria-label={`Layout ${i + 1}`}>
                <svg width="34" height="34" viewBox="0 0 34 34">
                  <path d={d} fill="#d9edf5" />
                  <path d="M9 0v34M9 26h25" stroke="#9fdcf1" strokeWidth="1.500" />
                </svg>
              </ToolButton>
            ))}
          </ToolBox>
        </HeaderTools>
      </Header>
      <Body>
        <Hierarchy />
        <Splitter>
          <Grip vertical />
        </Splitter>
        <Main>
          <DiagramView />
          <Splitter>
            <Grip />
          </Splitter>
          <Information />
        </Main>
      </Body>
    </Page>
  );
}
